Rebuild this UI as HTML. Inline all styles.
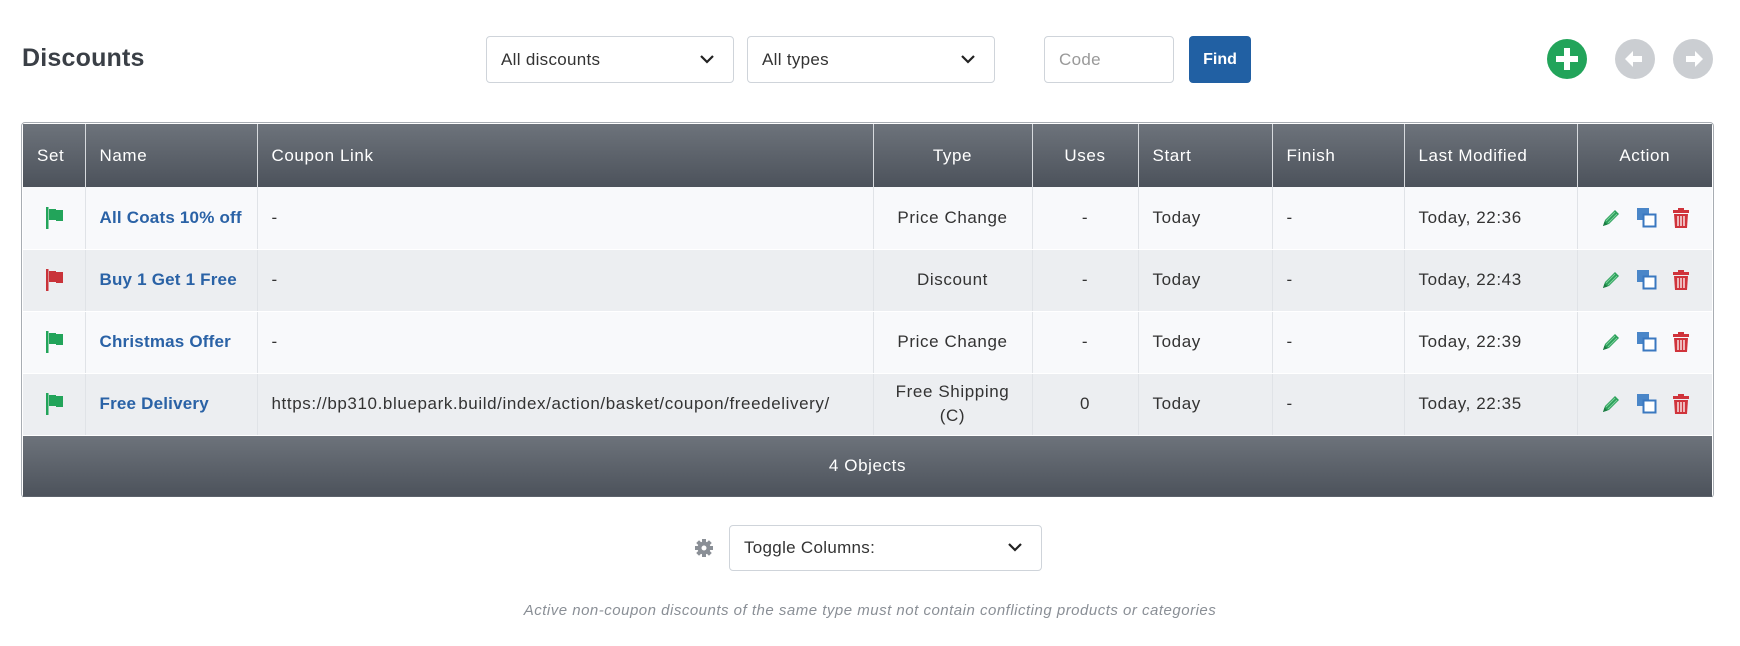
<!DOCTYPE html>
<html><head><meta charset="utf-8"><style>
*{box-sizing:border-box;margin:0;padding:0}
body{width:1740px;height:646px;background:#fff;font-family:"Liberation Sans",sans-serif;color:#333;position:relative;overflow:hidden}
.abs{position:absolute}
h1{position:absolute;left:22px;top:44px;font-size:25px;font-weight:bold;color:#3a3f46;letter-spacing:0.2px}
.sel{position:absolute;border:1px solid #cfd4da;border-radius:4px;background:#fff;font-size:17px;letter-spacing:0.3px;color:#333;padding-left:14px;display:flex;align-items:center}
.chev{position:absolute;right:18px;top:50%;margin-top:-7px}
.find{position:absolute;left:1189px;top:36px;width:62px;height:47px;background:#2160a3;border-radius:4px;color:#fff;font-weight:bold;font-size:16px;display:flex;align-items:center;justify-content:center}
.circ{position:absolute;width:40px;height:40px;border-radius:50%}
table{position:absolute;left:23px;top:124px;width:1689px;border-collapse:collapse;font-size:17px;letter-spacing:0.6px}
.wrap{position:absolute;left:21px;top:122px;width:1693px;height:376px;border:1px solid #a8adb3;border-radius:4px}
th{height:63px;background:linear-gradient(#6d737b,#4c525b);color:#fff;font-weight:normal;text-align:left;padding-left:14px;border-right:1px solid #d7dade;font-size:17px}
th:last-child{border-right:none}
td{height:62px;padding-left:14px;border-right:1px solid #e0e3e7;border-bottom:1px solid #fff}
td:last-child{border-right:none}
tr.a td{background:#f8f9fb}
tr.b td{background:#eceef1}
.c{text-align:center;padding-left:0}
a{color:#2a62a6;font-weight:bold;text-decoration:none;letter-spacing:0.2px}
tfoot td{background:linear-gradient(#6d737b,#4c525b);color:#fff;text-align:center;height:62px;padding:0;font-size:17px}
.note{position:absolute;left:0;width:1740px;top:602px;text-align:center;font-style:italic;color:#8a8f96;font-size:15px;letter-spacing:0.5px}
</style></head><body>
<h1>Discounts</h1>
<div class="sel" style="left:486px;top:36px;width:248px;height:47px">All discounts<svg class="chev" width="16" height="12" viewBox="0 0 16 12"><path d="M2 3l6 6 6-6" fill="none" stroke="#222" stroke-width="2.2"/></svg></div>
<div class="sel" style="left:747px;top:36px;width:248px;height:47px">All types<svg class="chev" width="16" height="12" viewBox="0 0 16 12"><path d="M2 3l6 6 6-6" fill="none" stroke="#222" stroke-width="2.2"/></svg></div>
<div class="sel" style="left:1044px;top:36px;width:130px;height:47px;color:#999">Code</div>
<div class="find">Find</div>
<div class="circ" style="left:1547px;top:39px;background:#22a45a"><svg width="40" height="40"><path d="M20 9v22M9 20h22" stroke="#fff" stroke-width="6"/></svg></div>
<div class="circ" style="left:1615px;top:39px;background:#cbced2"><svg width="40" height="40"><path d="M27 20H16" stroke="#fff" stroke-width="6"/><path d="M10 20l8-8v16z" fill="#fff"/></svg></div>
<div class="circ" style="left:1673px;top:39px;background:#cbced2"><svg width="40" height="40"><path d="M13 20h11" stroke="#fff" stroke-width="6"/><path d="M30 20l-8-8v16z" fill="#fff"/></svg></div>
<div class="wrap"></div>
<table>
<colgroup><col style="width:62px"><col style="width:172px"><col style="width:616px"><col style="width:159px"><col style="width:106px"><col style="width:134px"><col style="width:132px"><col style="width:173px"><col></colgroup>
<thead><tr><th>Set</th><th>Name</th><th>Coupon Link</th><th class="c">Type</th><th class="c">Uses</th><th>Start</th><th>Finish</th><th>Last Modified</th><th class="c">Action</th></tr></thead>
<tbody>
<tr class="a"><td class="f" data-c="#22a45a"></td><td><a>All Coats 10% off</a></td><td>-</td><td class="c">Price Change</td><td class="c">-</td><td>Today</td><td>-</td><td>Today, 22:36</td><td class="act"></td></tr>
<tr class="b"><td class="f" data-c="#c9333a"></td><td><a>Buy 1 Get 1 Free</a></td><td>-</td><td class="c">Discount</td><td class="c">-</td><td>Today</td><td>-</td><td>Today, 22:43</td><td class="act"></td></tr>
<tr class="a"><td class="f" data-c="#22a45a"></td><td><a>Christmas Offer</a></td><td>-</td><td class="c">Price Change</td><td class="c">-</td><td>Today</td><td>-</td><td>Today, 22:39</td><td class="act"></td></tr>
<tr class="b"><td class="f" data-c="#22a45a"></td><td><a>Free Delivery</a></td><td>https://bp310.bluepark.build/index/action/basket/coupon/freedelivery/</td><td class="c" style="line-height:24px">Free Shipping<br>(C)</td><td class="c">0</td><td>Today</td><td>-</td><td>Today, 22:35</td><td class="act"></td></tr>
</tbody>
<tfoot><tr><td colspan="9">4 Objects</td></tr></tfoot>
</table>
<svg class="abs" style="left:694px;top:538px" width="20" height="20" viewBox="0 0 20 20"><g fill="#8a8f96"><circle cx="10" cy="10" r="6.5"/><rect x="8" y="1" width="4" height="18"/><rect x="1" y="8" width="18" height="4"/><rect x="8" y="1" width="4" height="18" transform="rotate(45 10 10)"/><rect x="8" y="1" width="4" height="18" transform="rotate(-45 10 10)"/></g><circle cx="10" cy="10" r="2.5" fill="#fff"/></svg>
<div class="sel" style="left:729px;top:525px;width:313px;height:46px">Toggle Columns:<svg class="chev" width="16" height="12" viewBox="0 0 16 12"><path d="M2 3l6 6 6-6" fill="none" stroke="#222" stroke-width="2.2"/></svg></div>
<div class="note">Active non-coupon discounts of the same type must not contain conflicting products or categories</div>
<script>
document.querySelectorAll('td.f').forEach(function(t){var c=t.getAttribute('data-c');t.innerHTML='<svg width="20" height="22" viewBox="0 0 20 22" style="display:block;margin-left:9px"><rect x="0" y="0" width="2.5" height="22" fill="'+c+'"/><path d="M3 2h7v1h7v11h-7v-1H3z" fill="'+c+'"/></svg>';});
document.querySelectorAll('td.act').forEach(function(t){t.innerHTML='<div style="display:flex;align-items:center;gap:14px;padding-left:8px"><svg width="22" height="22" viewBox="0 0 22 22"><path d="M3 19l2-6L15 3l4 4L9 17z" fill="#2aa05a"/><path d="M6 14L15 5M8 16l9-9" stroke="#7fd09c" stroke-width="1"/><path d="M3 19l1.5-4.5 3 3z" fill="#1c7a42"/></svg><svg width="22" height="22" viewBox="0 0 22 22"><rect x="1" y="1" width="12" height="12" fill="#4a86c8"/><rect x="7.5" y="7.5" width="12" height="12" fill="#fff" stroke="#3a78c0" stroke-width="2"/></svg><svg width="18" height="22" viewBox="0 0 18 22"><path d="M6 1h6v2h5v3H1V3h5z" fill="#d0333b"/><path d="M2 7h14l-1 14H3z" fill="#d0333b"/><path d="M6 9v10M9 9v10M12 9v10" stroke="#fff" stroke-width="1.3"/></svg></div>';});
</script>
</body></html>
